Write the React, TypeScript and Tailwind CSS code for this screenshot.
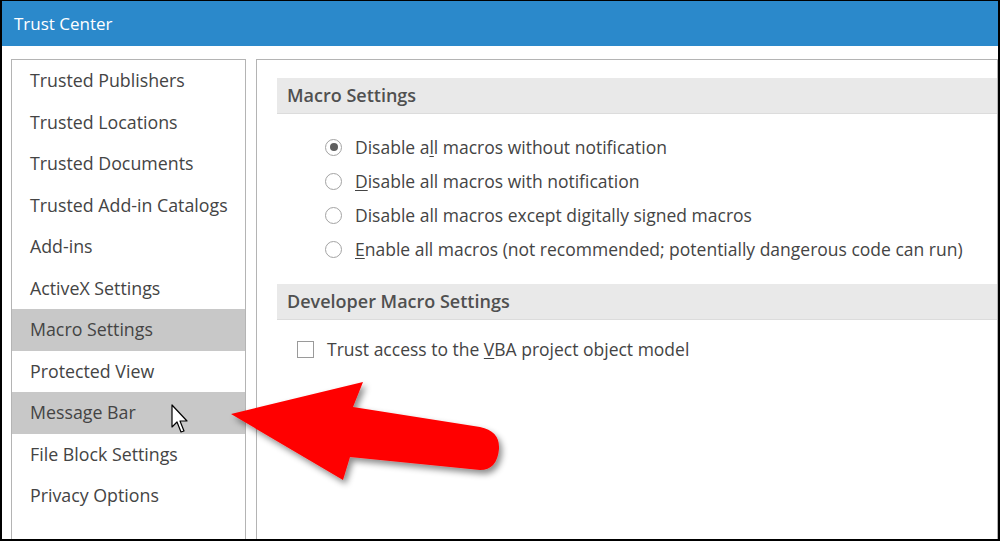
const navItems = [
  "Trusted Publishers",
  "Trusted Locations",
  "Trusted Documents",
  "Trusted Add-in Catalogs",
  "Add-ins",
  "ActiveX Settings",
  "Macro Settings",
  "Protected View",
  "Message Bar",
  "File Block Settings",
  "Privacy Options",
];

const highlighted = ["Macro Settings", "Message Bar"];

const Radio = ({ checked }: { checked?: boolean }) => (
  <span className="flex h-[17px] w-[17px] shrink-0 items-center justify-center rounded-full border-[1.5px] border-[#a3a3a3] bg-white">
    {checked && <span className="h-[8px] w-[8px] rounded-full bg-[#5f5f5f]" />}
  </span>
);

const SectionHeader = ({ children }: { children: React.ReactNode }) => (
  <div className="flex h-[36px] items-center border-b border-[#dcdcdc] bg-[#e9e9e9] pl-[10px] text-[18px] font-semibold text-[#505050]">
    {children}
  </div>
);

export default function App() {
  return (
    <div
      className="relative h-[541px] w-[1000px] overflow-hidden bg-black pt-[1px] pr-[2px] pb-[2px] pl-[2px]"
      style={{ fontFamily: '"Open Sans", "Noto Sans", sans-serif' }}
    >
      <div className="flex h-full w-full flex-col bg-white">
        {/* title bar */}
        <div className="flex h-[45px] shrink-0 items-center bg-[#2b89cb] pl-[12px] text-[17px] text-white">
          Trust Center
        </div>

        <div className="flex min-h-0 flex-1 pt-[13px]">
          {/* left nav */}
          <div className="ml-[9px] flex w-[235px] shrink-0 flex-col border-x border-t border-[#b4b4b4] text-[17.8px] text-[#444]">
            {navItems.map((item) => (
              <div
                key={item}
                className={`flex h-[41.5px] shrink-0 items-center pl-[18px] ${
                  highlighted.includes(item) ? "bg-[#c8c8c8]" : ""
                }`}
              >
                {item}
              </div>
            ))}
          </div>

          {/* right content */}
          <div className="ml-[10px] flex-1 border-x border-t border-[#b4b4b4] pt-[18px] pl-[20px]">
            <SectionHeader>Macro Settings</SectionHeader>
            <div className="flex flex-col pt-[16px] pl-[48px] text-[17.5px] text-[#444]">
              <div className="flex h-[34px] items-center gap-[13px]">
                <Radio checked />
                <span>
                  Disable a<u className="underline-offset-2">l</u>l macros without notification
                </span>
              </div>
              <div className="flex h-[34px] items-center gap-[13px]">
                <Radio />
                <span>
                  <u className="underline-offset-2">D</u>isable all macros with notification
                </span>
              </div>
              <div className="flex h-[34px] items-center gap-[13px]">
                <Radio />
                <span>
                  Disable all macros except di<u className="underline-offset-2">g</u>itally signed macros
                </span>
              </div>
              <div className="flex h-[34px] items-center gap-[13px]">
                <Radio />
                <span>
                  <u className="underline-offset-2">E</u>nable all macros (not recommended; potentially dangerous code can run)
                </span>
              </div>
            </div>

            <div className="pt-[18px]">
              <SectionHeader>Developer Macro Settings</SectionHeader>
            </div>
            <div className="flex h-[58px] items-center gap-[13px] pl-[20px] text-[17.5px] text-[#444]">
              <span className="h-[17px] w-[17px] shrink-0 border border-[#9a9a9a] bg-white" />
              <span>
                Trust access to the <u className="underline-offset-2">V</u>BA project object model
              </span>
            </div>
          </div>
        </div>
      </div>

      {/* red callout arrow */}
      <svg className="absolute left-0 top-0" width="1000" height="541" viewBox="0 0 1000 541">
        <defs>
          <filter id="sh" x="-20%" y="-20%" width="140%" height="140%">
            <feDropShadow dx="3" dy="4" stdDeviation="3" floodColor="#000" floodOpacity="0.45" />
          </filter>
        </defs>
        <path
          d="M231 414 L363 382 L353 407 L480 427 Q500 431 499 449 Q497 470 480 470 L350 457 L343 480 Z"
          fill="#ff0000"
          filter="url(#sh)"
        />
        {/* mouse pointer */}
        <path
          d="M172 405 L172 427 L177 422 L181 432 L184 431 L180 421 L187 421 Z"
          fill="#fff"
          stroke="#000"
          strokeWidth="1.2"
          strokeLinejoin="round"
        />
      </svg>
    </div>
  );
}
